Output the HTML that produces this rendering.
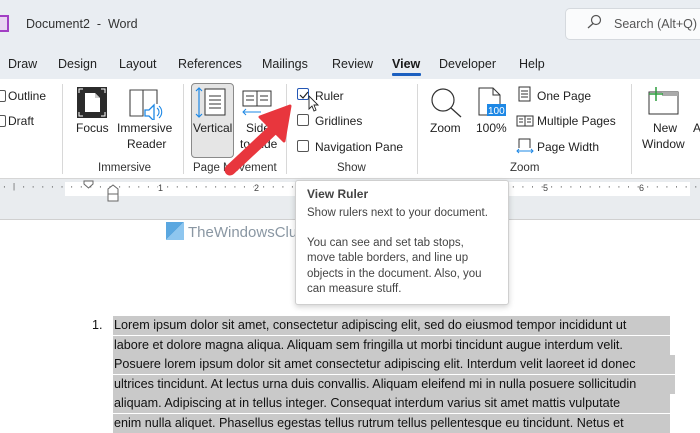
<!DOCTYPE html>
<html><head><meta charset="utf-8"><style>
*{margin:0;padding:0;box-sizing:border-box}
body{width:700px;height:428px;overflow:hidden;position:relative;background:#fff;font-family:"Liberation Sans",sans-serif;color:#222}
.a{position:absolute;white-space:nowrap}
.t{font-size:12px;color:#222}
.sep{position:absolute;width:1px;background:#d8d8d8;top:84px;height:90px}
.cb{position:absolute;width:12px;height:12px;border:1px solid #555;border-radius:2px;background:#fff}
.ln{position:absolute;left:113px;height:19px;background:#c9c9c9;font-size:12.6px;line-height:19px;color:#111;white-space:nowrap;padding-left:1px}
.tt{font-size:11.5px;color:#444}
</style></head><body>
<div class="a" style="left:0;top:0;width:700px;height:80px;background:#e9edf2"></div>
<div class="a" style="left:0;top:15px;width:9px;height:17px;border:2px solid #a23fc4;border-left:none;background:#e9d4f2"></div>
<div class="a t" style="left:26px;top:17px;font-size:12.5px;color:#333">Document2 &nbsp;-&nbsp; Word</div>
<div class="a" style="left:565px;top:8px;width:140px;height:32px;background:#fafbfc;border:1px solid #d5d9de;border-radius:5px"></div>
<svg class="a" style="left:586px;top:14px" width="16" height="16"><circle cx="10" cy="6" r="4.5" fill="none" stroke="#555" stroke-width="1.2"/><line x1="7" y1="9.5" x2="2" y2="14" stroke="#555" stroke-width="1.3"/></svg>
<div class="a t" style="left:614px;top:17px;color:#555;font-size:12.5px">Search (Alt+Q)</div>
<div class="a t" style="left:8px;top:57px;font-size:12.5px">Draw</div>
<div class="a t" style="left:58px;top:57px;font-size:12.5px">Design</div>
<div class="a t" style="left:119px;top:57px;font-size:12.5px">Layout</div>
<div class="a t" style="left:178px;top:57px;font-size:12.5px">References</div>
<div class="a t" style="left:262px;top:57px;font-size:12.5px">Mailings</div>
<div class="a t" style="left:332px;top:57px;font-size:12.5px">Review</div>
<div class="a t" style="left:392px;top:57px;font-size:12.5px;font-weight:bold;color:#1a1a1a">View</div>
<div class="a" style="left:392px;top:73px;width:29px;height:3px;background:#1b5fc0;border-radius:1px"></div>
<div class="a t" style="left:439px;top:57px;font-size:12.5px">Developer</div>
<div class="a t" style="left:519px;top:57px;font-size:12.5px">Help</div>
<div class="a" style="left:0;top:79px;width:700px;height:100px;background:#fff;border-bottom:1px solid #d6d6d6"></div>
<div class="cb" style="left:-6px;top:90px"></div><div class="a t" style="left:8px;top:89px">Outline</div>
<div class="cb" style="left:-6px;top:115px"></div><div class="a t" style="left:8px;top:114px">Draft</div>
<div class="sep" style="left:62px"></div>
<svg class="a" style="left:77px;top:87px" width="30" height="31"><rect x="0" y="0" width="30" height="31" fill="#2b2b2b"/><path d="M8 6h10l5 5v14H8z" fill="#fff"/><path d="M18 6v5h5" fill="#ccc"/><path d="M2 6V2h4M24 2h4v4M2 25v4h4M28 25v4h-4" stroke="#fff" fill="none"/></svg>
<div class="a t" style="left:76px;top:121px">Focus</div>
<svg class="a" style="left:129px;top:88px" width="34" height="32"><path d="M1 2h13v26H1zM14 2h14v14" fill="none" stroke="#444" stroke-width="1.1"/><path d="M16 22h4l5-5v16l-5-5h-4z" fill="#fff" stroke="#1e88e5" stroke-width="1.3"/><path d="M28 20a5 5 0 0 1 0 8M30 18a8 8 0 0 1 0 12" fill="none" stroke="#1e88e5" stroke-width="1.1"/></svg>
<div class="a t" style="left:117px;top:121px">Immersive</div>
<div class="a t" style="left:127px;top:137px">Reader</div>
<div class="a t" style="left:98px;top:162px;font-size:11.5px;color:#333">Immersive</div>
<div class="sep" style="left:183px"></div>
<div class="a" style="left:191px;top:83px;width:43px;height:75px;background:#e5e5e5;border:1px solid #8a8a8a;border-radius:4px"></div>
<svg class="a" style="left:195px;top:87px" width="34" height="32"><path d="M4 1v29M1 4l3-3 3 3M1 27l3 3 3-3" stroke="#1e88e5" fill="none" stroke-width="1.2"/><rect x="10" y="2" width="20" height="26" fill="#fff" stroke="#333"/><path d="M14 9h12M14 13h12M14 17h12M14 21h12" stroke="#333"/></svg>
<div class="a t" style="left:193px;top:121px">Vertical</div>
<svg class="a" style="left:242px;top:90px" width="32" height="26"><rect x="1" y="1" width="28" height="15" fill="#fff" stroke="#333"/><path d="M15 1v15M4 6h8M4 10h8M18 6h8M18 10h8" stroke="#333"/><path d="M1 22h18M4 19l-3 3 3 3" stroke="#1e88e5" fill="none"/></svg>
<div class="a t" style="left:246px;top:121px">Side</div>
<div class="a t" style="left:240px;top:137px">to Side</div>
<div class="a t" style="left:193px;top:162px;font-size:11.5px;color:#333">Page Movement</div>
<div class="sep" style="left:286px"></div>
<div class="cb" style="left:297px;top:88px;border-color:#2457b5"></div>
<svg class="a" style="left:299px;top:90px" width="10" height="10"><path d="M1 5l3 3 5-6" stroke="#222" fill="none" stroke-width="1.2"/></svg>
<div class="a t" style="left:315px;top:89px">Ruler</div>
<svg class="a" style="left:308px;top:95px" width="12" height="18"><path d="M1 1v13l3-3 2 5 2-1-2-5h4z" fill="#fff" stroke="#222" stroke-width="0.9"/></svg>
<div class="cb" style="left:297px;top:114px"></div><div class="a t" style="left:315px;top:114px">Gridlines</div>
<div class="cb" style="left:297px;top:140px"></div><div class="a t" style="left:315px;top:140px">Navigation Pane</div>
<div class="a t" style="left:337px;top:162px;font-size:11.5px;color:#333">Show</div>
<div class="sep" style="left:417px"></div>
<svg class="a" style="left:430px;top:87px" width="34" height="32"><circle cx="13" cy="13" r="11" fill="none" stroke="#333" stroke-width="1.2"/><line x1="21" y1="21" x2="31" y2="30" stroke="#333" stroke-width="1.3"/></svg>
<div class="a t" style="left:430px;top:121px">Zoom</div>
<svg class="a" style="left:478px;top:87px" width="30" height="32"><path d="M1 1h14l7 7v20H1z" fill="#fff" stroke="#333"/><path d="M15 1v7h7" fill="none" stroke="#333"/><rect x="9" y="17" width="19" height="12" fill="#1e88e5"/><text x="10" y="27" font-size="10" fill="#fff" font-family="Liberation Sans">100</text></svg>
<div class="a t" style="left:476px;top:121px">100%</div>
<svg class="a" style="left:517px;top:86px" width="16" height="16"><rect x="2" y="1" width="11" height="14" fill="#fff" stroke="#333"/><path d="M4 5h7M4 8h7M4 11h7" stroke="#333"/></svg>
<div class="a t" style="left:537px;top:89px">One Page</div>
<svg class="a" style="left:516px;top:115px" width="18" height="12"><rect x="1" y="1" width="16" height="10" fill="#fff" stroke="#333"/><path d="M9 1v10M3 4h4M3 7h4M11 4h4M11 7h4" stroke="#333"/></svg>
<div class="a t" style="left:537px;top:114px">Multiple Pages</div>
<svg class="a" style="left:516px;top:138px" width="18" height="16"><path d="M3 10V1h11v9" fill="none" stroke="#333"/><path d="M1 13h16M3 11l-2 2 2 2M15 11l2 2-2 2" stroke="#1e88e5" fill="none"/></svg>
<div class="a t" style="left:537px;top:140px">Page Width</div>
<div class="a t" style="left:510px;top:162px;font-size:11.5px;color:#333">Zoom</div>
<div class="sep" style="left:631px"></div>
<svg class="a" style="left:646px;top:87px" width="34" height="28"><rect x="3" y="5" width="29" height="22" fill="#fff" stroke="#333"/><rect x="16" y="5" width="16" height="4" fill="#aaa"/><path d="M10 0v14M3 7h14" stroke="#2e9e3e" stroke-width="1.5"/></svg>
<div class="a t" style="left:653px;top:121px">New</div>
<div class="a t" style="left:642px;top:137px">Window</div>
<div class="a t" style="left:693px;top:121px">A</div>
<div class="a" style="left:0;top:179px;width:700px;height:41px;background:#e9ecef;border-bottom:1px solid #d0d0d0"></div>
<div class="a" style="left:65px;top:182px;width:625px;height:14px;background:#fff"></div>
<div class="a" style="left:0;top:183px;width:700px;height:12px;overflow:hidden;font-size:8px;color:#555;font-family:'Liberation Mono',monospace">
<span style="position:absolute;left:2px;white-space:nowrap">· | · · · · · · · · · · · · · · · · · · · · · · · · · · · · · · · · · · · · · · · · · · · · · · · · · · · · · · · · · · · · · · · · · · · · · · · · · · · · · · · · · · · · · · · · · · · · · · · · · · · ·</span>
</div>
<div class="a" style="left:158px;top:183px;font-size:9px;color:#444;background:#fff">1</div>
<div class="a" style="left:254px;top:183px;font-size:9px;color:#444;background:#fff">2</div>
<div class="a" style="left:543px;top:183px;font-size:9px;color:#444;background:#fff">5</div>
<div class="a" style="left:639px;top:183px;font-size:9px;color:#444;background:#fff">6</div>
<svg class="a" style="left:82px;top:180px" width="40" height="22"><path d="M2 1h9v3l-4.5 4L2 4z" fill="#fff" stroke="#666"/><path d="M26 9l5-4 5 4v12h-10z" fill="#fff" stroke="#666"/><line x1="26" y1="14" x2="36" y2="14" stroke="#666"/></svg>
<svg class="a" style="left:166px;top:222px" width="18" height="18"><path d="M0 0h18L0 18z" fill="#5aa7e0"/><path d="M18 0v18H0z" fill="#8ec6ef"/></svg>
<div class="a" style="left:188px;top:224px;font-size:15px;color:#8a97a3">TheWindowsClub</div>
<div class="a" style="left:295px;top:180px;width:214px;height:125px;background:#fff;border:1px solid #cfcfcf;border-radius:3px;box-shadow:0 2px 6px rgba(0,0,0,.18)"></div>
<div class="a tt" style="left:307px;top:187px;font-weight:bold;font-size:12px;color:#444">View Ruler</div>
<div class="a tt" style="left:307px;top:207px">Show rulers next to your document.</div>
<div class="a tt" style="left:307px;top:237px">You can see and set tab stops,</div>
<div class="a tt" style="left:307px;top:252px">move table borders, and line up</div>
<div class="a tt" style="left:307px;top:268px">objects in the document. Also, you</div>
<div class="a tt" style="left:307px;top:283px">can measure stuff.</div>
<svg class="a" style="left:210px;top:95px" width="100" height="90"><line x1="20" y1="75" x2="66" y2="32" stroke="#e8363d" stroke-width="11" stroke-linecap="round"/><path d="M80 11L50 22 74 46z" fill="#e8363d" stroke="#e8363d" stroke-width="3" stroke-linejoin="round"/></svg>
<div class="a" style="left:92px;top:316px;font-size:12.6px;line-height:19px;color:#111">1.</div>
<div class="ln" style="top:316px;width:557px">Lorem ipsum dolor sit amet, consectetur adipiscing elit, sed do eiusmod tempor incididunt ut</div>
<div class="ln" style="top:335.6px;width:557px">labore et dolore magna aliqua. Aliquam sem fringilla ut morbi tincidunt augue interdum velit.</div>
<div class="ln" style="top:355.2px;width:562px">Posuere lorem ipsum dolor sit amet consectetur adipiscing elit. Interdum velit laoreet id donec</div>
<div class="ln" style="top:374.8px;width:562px">ultrices tincidunt. At lectus urna duis convallis. Aliquam eleifend mi in nulla posuere sollicitudin</div>
<div class="ln" style="top:394.4px;width:557px">aliquam. Adipiscing at in tellus integer. Consequat interdum varius sit amet mattis vulputate</div>
<div class="ln" style="top:414px;width:557px">enim nulla aliquet. Phasellus egestas tellus rutrum tellus pellentesque eu tincidunt. Netus et</div>
</body></html>
